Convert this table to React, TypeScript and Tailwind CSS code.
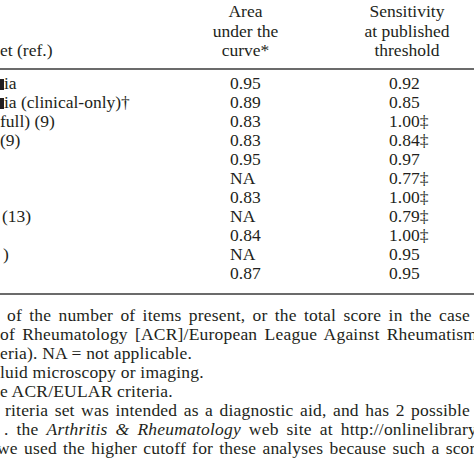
const Stub = () => <span className="inline-block w-[4px] h-[11px] bg-[#231f20] align-[-1px]" />;

const rows: { name: React.ReactNode; auc: string; sens: string }[] = [
  { name: <><Stub />ia</>, auc: '0.95', sens: '0.92' },
  { name: <><Stub />ia (clinical-only)†</>, auc: '0.89', sens: '0.85' },
  { name: 'full) (9)', auc: '0.83', sens: '1.00‡' },
  { name: '(9)', auc: '0.83', sens: '0.84‡' },
  { name: '', auc: '0.95', sens: '0.97' },
  { name: '', auc: 'NA', sens: '0.77‡' },
  { name: '', auc: '0.83', sens: '1.00‡' },
  { name: <span className="ml-[2px]">(13)</span>, auc: 'NA', sens: '0.79‡' },
  { name: '', auc: '0.84', sens: '1.00‡' },
  { name: <span className="ml-[3px]">)</span>, auc: 'NA', sens: '0.95' },
  { name: '', auc: '0.87', sens: '0.95' },
];

export default function App() {
  return (
    <div
      className="w-[474px] h-[474px] overflow-hidden bg-white text-[#231f20] text-[17.5px] leading-[19px]"
      style={{ fontFamily: '"Liberation Serif", "Times New Roman", serif' }}
    >
      {/* header */}
      <div className="grid grid-cols-[180px_131px_163px] leading-[19.5px] pt-[2px] pb-[7px] border-b-2 border-[#6b6b6b]">
        <div className="flex flex-col justify-end whitespace-nowrap">
          <span>et (ref.)</span>
        </div>
        <div className="text-center">
          Area
          <br />
          under the
          <br />
          curve*
        </div>
        <div className="text-center pl-[29px]">
          Sensitivity
          <br />
          at published
          <br />
          threshold
        </div>
      </div>

      {/* body */}
      <div className="pt-[4px] pb-[10px] border-b-2 border-[#6b6b6b]">
        {rows.map((r, i) => (
          <div key={i} className="grid grid-cols-[180px_131px_163px] h-[19px] whitespace-nowrap">
            <div>{r.name}</div>
            <div className="pl-[50px]">{r.auc}</div>
            <div className="pl-[78px]">{r.sens}</div>
          </div>
        ))}
      </div>

      {/* footnotes */}
      <div className="pt-[11px] leading-[19.1px] tracking-[0.2px] whitespace-nowrap">
        <div className="pl-[7px] w-[470px] [text-align-last:justify]">
          of the number of items present, or the total score in the case
        </div>
        <div className="[word-spacing:2.7px]">of Rheumatology [ACR]/European League Against Rheumatism</div>
        <div>eria). NA = not applicable.</div>
        <div>luid microscopy or imaging.</div>
        <div>e ACR/EULAR criteria.</div>
        <div className="pl-[5px] w-[470px] [text-align-last:justify]">
          riteria set was intended as a diagnostic aid, and has 2 possible
        </div>
        <div className="pl-[4px] [word-spacing:3.4px]">
          . the <i>Arthritis &amp; Rheumatology</i> web site at http://onlinelibrary.wiley.com
        </div>
        <div className="-ml-[3px] [word-spacing:1.6px]">
          we used the higher cutoff for these analyses because such a score
        </div>
      </div>
    </div>
  );
}
